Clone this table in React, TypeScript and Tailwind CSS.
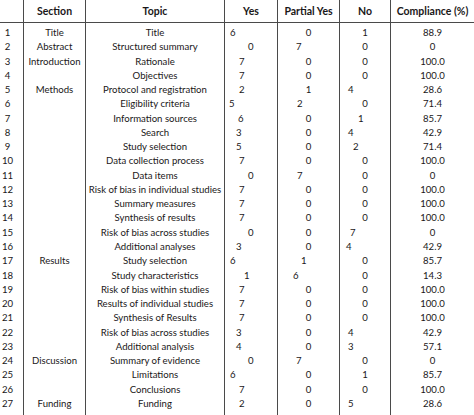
// PRISMA compliance table, rendered as a bordered grid.
type Cell = string | [string, number]; // [value, left offset px] or centered

type Row = {
  section?: string;
  topic: string;
  yes: Cell;
  partial: Cell;
  no: Cell;
  pct: string;
};

const ROWS: Row[] = [
  { section: "Title", topic: "Title", yes: ["6", 5], partial: "0", no: "1", pct: "88.9" },
  { section: "Abstract", topic: "Structured summary", yes: ["0", 23], partial: ["7", 18], no: "0", pct: "0" },
  { section: "Introduction", topic: "Rationale", yes: ["7", 14], partial: "0", no: "0", pct: "100.0" },
  { topic: "Objectives", yes: ["7", 14], partial: "0", no: "0", pct: "100.0" },
  { section: "Methods", topic: "Protocol and registration", yes: ["2", 14], partial: "1", no: ["4", 8], pct: "28.6" },
  { topic: "Eligibility criteria", yes: ["5", 4], partial: ["2", 19], no: "0", pct: "71.4" },
  { topic: "Information sources", yes: ["6", 13], partial: "0", no: ["1", 18], pct: "85.7" },
  { topic: "Search", yes: ["3", 11], partial: "0", no: ["4", 8], pct: "42.9" },
  { topic: "Study selection", yes: ["5", 11], partial: "0", no: ["2", 13], pct: "71.4" },
  { topic: "Data collection process", yes: ["7", 14], partial: "0", no: "0", pct: "100.0" },
  { topic: "Data items", yes: ["0", 23], partial: ["7", 19], no: "0", pct: "0" },
  { topic: "Risk of bias in individual studies", yes: ["7", 14], partial: "0", no: "0", pct: "100.0" },
  { topic: "Summary measures", yes: ["7", 14], partial: "0", no: "0", pct: "100.0" },
  { topic: "Synthesis of results", yes: ["7", 14], partial: "0", no: "0", pct: "100.0" },
  { topic: "Risk of bias across studies", yes: ["0", 23], partial: "0", no: ["7", 10], pct: "0" },
  { topic: "Additional analyses", yes: ["3", 11], partial: "0", no: ["4", 6], pct: "42.9" },
  { section: "Results", topic: "Study selection", yes: ["6", 5], partial: ["1", 23], no: "0", pct: "85.7" },
  { topic: "Study characteristics", yes: ["1", 19], partial: ["6", 15], no: "0", pct: "14.3" },
  { topic: "Risk of bias within studies", yes: ["7", 14], partial: "0", no: "0", pct: "100.0" },
  { topic: "Results of individual studies", yes: ["7", 14], partial: "0", no: "0", pct: "100.0" },
  { topic: "Synthesis of Results", yes: ["7", 14], partial: "0", no: "0", pct: "100.0" },
  { topic: "Risk of bias across studies", yes: ["3", 11], partial: "0", no: ["4", 8], pct: "42.9" },
  { topic: "Additional analysis", yes: ["4", 11], partial: "0", no: ["3", 8], pct: "57.1" },
  { section: "Discussion", topic: "Summary of evidence", yes: ["0", 23], partial: ["7", 18], no: "0", pct: "0" },
  { topic: "Limitations", yes: ["6", 5], partial: "0", no: "1", pct: "85.7" },
  { topic: "Conclusions", yes: ["7", 14], partial: "0", no: "0", pct: "100.0" },
  { section: "Funding", topic: "Funding", yes: ["2", 14], partial: "0", no: ["5", 8], pct: "28.6" },
];

const GRID = "grid grid-cols-[23px_62px_139px_53px_62px_51px_1fr]";
const LINE = "border-l border-[#4a4a4a]";

function Num({ cell }: { cell: Cell }) {
  if (typeof cell === "string") {
    return <div className={`${LINE} text-center`}>{cell}</div>;
  }
  const [value, offset] = cell;
  return (
    <div className={LINE} style={{ paddingLeft: offset }}>
      {value}
    </div>
  );
}

function Spacer({ h }: { h: string }) {
  return (
    <div className={`${GRID} ${h}`}>
      <div />
      <div className={LINE} />
      <div className={LINE} />
      <div className={LINE} />
      <div className={LINE} />
      <div className={LINE} />
      <div className={LINE} />
    </div>
  );
}

export default function App() {
  return (
    <div
      className="h-[415px] w-[474px] overflow-hidden bg-white text-[#1a1718]"
      style={{ fontFamily: "Lato, 'Open Sans', sans-serif" }}
    >
      <div className={`${GRID} h-[23px] border-b border-[#4a4a4a] text-[10.5px] font-bold leading-[22px]`}>
        <div />
        <div className={`${LINE} text-center`}>Section</div>
        <div className={`${LINE} text-center`}>Topic</div>
        <div className={`${LINE} text-center`}>Yes</div>
        <div className={`${LINE} text-center`}>Partial Yes</div>
        <div className={`${LINE} text-center`}>No</div>
        <div className={`${LINE} text-center`}>Compliance (%)</div>
      </div>

      <Spacer h="h-[3px]" />

      <div className="text-[9.6px] leading-[14.27px]">
        {ROWS.map((r, i) => (
          <div key={i} className={`${GRID} h-[14.27px]`}>
            <div className="pr-[8px] text-center">{i + 1}</div>
            <div className={`${LINE} text-center`}>{r.section ?? ""}</div>
            <div className={`${LINE} whitespace-nowrap text-center`}>{r.topic}</div>
            <Num cell={r.yes} />
            <Num cell={r.partial} />
            <Num cell={r.no} />
            <div className={`${LINE} text-center`}>{r.pct}</div>
          </div>
        ))}
      </div>

      <Spacer h="h-[10px]" />
    </div>
  );
}
